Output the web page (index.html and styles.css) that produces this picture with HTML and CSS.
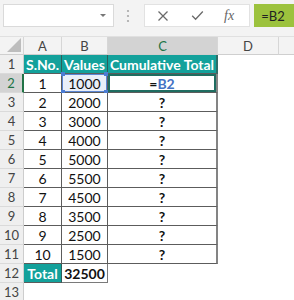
FILE: index.html
```html
<!DOCTYPE html>
<html>
<head>
<meta charset="utf-8">
<link rel="stylesheet" href="styles.css">
</head>
<body>
<div class="app">
  <div class="toolbar">
    <div class="namebox"><span class="caret"></span></div>
    <svg class="dots" width="4" height="14" viewBox="0 0 4 14"><circle cx="2" cy="2" r="1.1"/><circle cx="2" cy="7" r="1.1"/><circle cx="2" cy="12" r="1.1"/></svg>
    <div class="fbar">
      <svg class="ic" width="12" height="12" viewBox="0 0 12 12"><path d="M1.5 1.5 L10.5 10.5 M10.5 1.5 L1.5 10.5"/></svg>
      <svg class="ic" width="13" height="11" viewBox="0 0 13 11"><path d="M1.2 5.8 L4.6 9.2 L11.8 1.5"/></svg>
      <span class="fx">fx</span>
    </div>
    <div class="fval">=B2</div>
  </div>
  <div class="sheet">
    <div class="corner"><span class="tri"></span></div>
    <div class="ch">A</div><div class="ch">B</div><div class="ch sel">C</div><div class="ch">D</div><div class="ch last"></div>

    <div class="rh">1</div><div class="t hd">S.No.</div><div class="t hd">Values</div><div class="t hd cc">Cumulative Total</div><div class="e"></div><div class="e"></div>
    <div class="rh rsel">2</div><div class="t">1</div><div class="t ref">1000<i class="h tl"></i><i class="h tr"></i><i class="h bl"></i><i class="h br"></i></div><div class="t cc active">=<b class="blue">B2</b></div><div class="e"></div><div class="e"></div>
    <div class="rh">3</div><div class="t">2</div><div class="t">2000</div><div class="t cc q">?</div><div class="e"></div><div class="e"></div>
    <div class="rh">4</div><div class="t">3</div><div class="t">3000</div><div class="t cc q">?</div><div class="e"></div><div class="e"></div>
    <div class="rh">5</div><div class="t">4</div><div class="t">4000</div><div class="t cc q">?</div><div class="e"></div><div class="e"></div>
    <div class="rh">6</div><div class="t">5</div><div class="t">5000</div><div class="t cc q">?</div><div class="e"></div><div class="e"></div>
    <div class="rh">7</div><div class="t">6</div><div class="t">5500</div><div class="t cc q">?</div><div class="e"></div><div class="e"></div>
    <div class="rh">8</div><div class="t">7</div><div class="t">4500</div><div class="t cc q">?</div><div class="e"></div><div class="e"></div>
    <div class="rh">9</div><div class="t">8</div><div class="t">3500</div><div class="t cc q">?</div><div class="e"></div><div class="e"></div>
    <div class="rh">10</div><div class="t">9</div><div class="t">2500</div><div class="t cc q">?</div><div class="e"></div><div class="e"></div>
    <div class="rh">11</div><div class="t">10</div><div class="t">1500</div><div class="t cc q">?</div><div class="e"></div><div class="e"></div>
    <div class="rh">12</div><div class="t hd">Total</div><div class="t tot">32500</div><div class="e"></div><div class="e"></div><div class="e"></div>
    <div class="rh">13</div><div class="e"></div><div class="e"></div><div class="e"></div><div class="e"></div><div class="e"></div>
  </div>
</div>
</body>
</html>
```
FILE: styles.css
```css
* { box-sizing: border-box; margin: 0; padding: 0; }
html, body { width: 294px; height: 300px; overflow: hidden; background: #fff; }
body { font-family: Lato, "Liberation Sans", sans-serif; color: #111; }
.app { width: 294px; }

.toolbar {
  height: 37px;
  background: #f3f3f3;
  display: flex;
  align-items: flex-start;
  padding: 4px 0 0 3px;
  border-bottom: 1px solid #e0e0e0;
}
.namebox {
  width: 111px; height: 23px;
  background: #fff;
  border: 1px solid #dadada;
  display: flex; align-items: center; justify-content: flex-end;
  padding-right: 7px;
}
.caret {
  width: 0; height: 0;
  border-left: 3px solid transparent;
  border-right: 3px solid transparent;
  border-top: 3px solid #777;
}
.dots { fill: #a8a8a8; margin: 5px 0 0 12px; }
.fbar {
  margin-left: 14px;
  width: 106px; height: 23px;
  background: #fff;
  border: 1px solid #e2e2e2;
  display: flex; align-items: center;
  padding-left: 12px;
  gap: 22px;
}
.ic { fill: none; stroke: #6a6a6a; stroke-width: 1.3; }
.fx {
  font-family: "Liberation Serif", serif;
  font-style: italic;
  font-size: 14px;
  color: #666;
  margin-left: -2px;
}
.fval {
  margin-left: 4px;
  flex: 1;
  height: 23px;
  background: #9cc23d;
  font-size: 13px;
  color: #222;
  display: flex; align-items: center; justify-content: center;
  padding-right: 2px;
}

.sheet {
  display: grid;
  grid-template-columns: 24px 38px 46px 110px 61px 15px;
  grid-template-rows: 18px repeat(13, 19px);
  font-size: 14px;
}
.sheet > div {
  display: flex; align-items: center; justify-content: center;
  position: relative;
}
.corner { background: #f3f3f3; border-right: 1px solid #d6d6d6; border-bottom: 1px solid #cfcfcf; }
.tri {
  position: absolute; right: 2px; bottom: 2px;
  width: 0; height: 0;
  border-left: 14px solid transparent;
  border-bottom: 14px solid #bdbdbd;
}
.ch {
  background: #f3f3f3;
  color: #444;
  font-size: 13px;
  border-right: 1px solid #d6d6d6;
  border-bottom: 1px solid #cfcfcf;
}
.ch.sel { background: #d3d3d3; color: #217346; }
.ch.last { border-right: none; }
.rh {
  background: #efefef;
  color: #444;
  font-size: 13px;
  border-right: 1px solid #cdcdcd;
  border-bottom: 1px solid #dadada;
}
.rh.rsel { background: #d3d3d3; color: #217346; border-right: 2px solid #217346; }
.e { background: #fff; }

.t {
  background: #fff;
  border-right: 1px solid #5c5c5c;
  border-bottom: 1px solid #5c5c5c;
  color: #111;
}
.t.cc { border-right: 2px solid #848484; }
.hd {
  background: #13a19b;
  color: #fff;
  font-weight: bold;
  border-right-color: #2e5e5a;
}
.t.hd.cc { border-right: 2px solid #2e6e68; }
.q { font-weight: bold; }
.tot { font-weight: bold; border-right: 1px solid #7a7a7a; border-bottom: 1px solid #7a7a7a; }
.active {
  box-shadow: inset 0 0 0 2px #1f6d61;
  font-weight: bold;
}
.blue { color: #4472c4; font-weight: bold; }
.ref {
  background: #e9eff9;
  box-shadow: inset 0 0 0 1px #5b86d4;
}
.h {
  position: absolute;
  width: 4px; height: 4px;
  background: #4c7cd2;
}
.h.tl { left: -1px; top: -2px; }
.h.tr { right: -1px; top: -2px; }
.h.bl { left: -1px; bottom: -2px; }
.h.br { right: -1px; bottom: -2px; }
```
